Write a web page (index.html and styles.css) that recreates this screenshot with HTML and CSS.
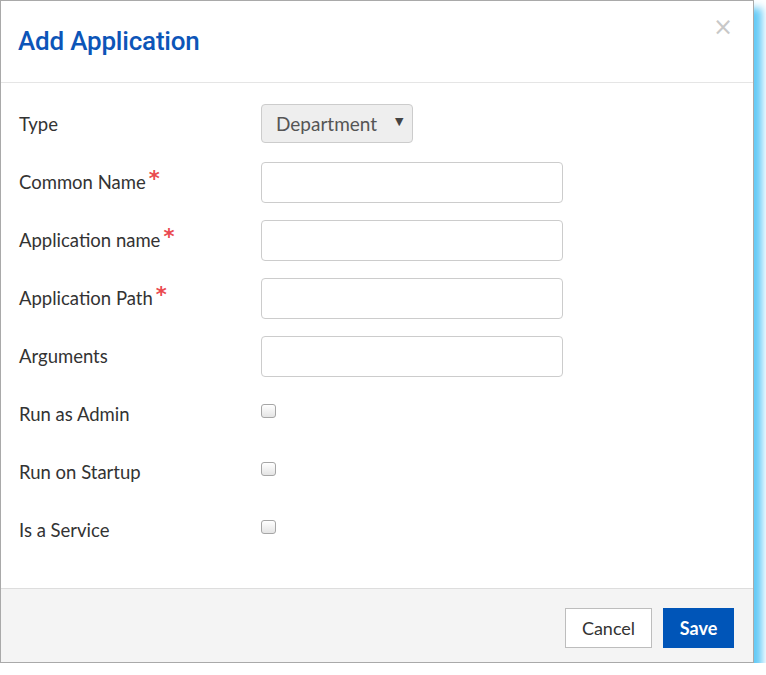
FILE: index.html
```html
<!DOCTYPE html>
<html>
<head>
<meta charset="utf-8">
<link rel="stylesheet" href="styles.css">
</head>
<body>
<div class="modal">
  <div class="modal-header">
    <h1 class="modal-title">Add Application</h1>
    <span class="close">&times;</span>
  </div>
  <div class="modal-body">
    <div class="row">
      <label class="lbl">Type</label>
      <div class="select">Department <span class="caret">&#9660;</span></div>
    </div>
    <div class="row">
      <label class="lbl">Common Name<span class="req">*</span></label>
      <div class="input"></div>
    </div>
    <div class="row">
      <label class="lbl">Application name<span class="req">*</span></label>
      <div class="input"></div>
    </div>
    <div class="row">
      <label class="lbl">Application Path<span class="req">*</span></label>
      <div class="input"></div>
    </div>
    <div class="row">
      <label class="lbl">Arguments</label>
      <div class="input"></div>
    </div>
    <div class="row row-check">
      <label class="lbl">Run as Admin</label>
      <span class="check"></span>
    </div>
    <div class="row row-check">
      <label class="lbl">Run on Startup</label>
      <span class="check"></span>
    </div>
    <div class="row row-check">
      <label class="lbl">Is a Service</label>
      <span class="check"></span>
    </div>
  </div>
  <div class="modal-footer">
    <button class="btn btn-default">Cancel</button>
    <button class="btn btn-primary">Save</button>
  </div>
</div>
</body>
</html>
```
FILE: styles.css
```css
html, body {
  margin: 0;
  padding: 0;
  background: #ffffff;
}
body {
  font-family: Lato, "Open Sans", sans-serif;
  color: #333333;
}
.modal {
  position: relative;
  box-sizing: border-box;
  width: 754px;
  height: 663px;
  border: 1px solid #a9a9a9;
  background: #ffffff;
  box-shadow: 8px 8px 8px rgba(80, 195, 245, 0.9);
  display: flex;
  flex-direction: column;
}
.modal-header {
  position: relative;
  height: 81px;
  border-bottom: 1px solid #e5e5e5;
  padding: 0 17px;
  display: flex;
  align-items: center;
}
.modal-title {
  margin: 0;
  font-family: Roboto, sans-serif;
  font-weight: 500;
  font-size: 26px;
  color: #0c55b8;
  letter-spacing: -0.2px;
  padding-bottom: 1px;
}
.close {
  position: absolute;
  right: 20px;
  top: 12px;
  font-family: "DejaVu Sans", sans-serif;
  font-size: 24px;
  color: #c8c8c8;
}
.modal-body {
  flex: 1;
  padding: 21px 18px 0 17px;
}
.row {
  display: flex;
  align-items: center;
  height: 40px;
  margin-bottom: 18px;
}
.lbl {
  width: 242px;
  font-size: 18.5px;
  color: #333;
  padding-left: 1px;
}
.req {
  color: #ea4a50;
  font-family: "DejaVu Sans", sans-serif;
  font-size: 21px;
  margin-left: 3px;
  position: relative;
  top: -3px;
  font-weight: bold;
}
.select {
  box-sizing: border-box;
  width: 152px;
  height: 39px;
  margin-top: -1px;
  background: #eeeeee;
  border: 1px solid #cccccc;
  border-radius: 4px;
  font-size: 19px;
  color: #555555;
  padding-left: 14px;
  display: flex;
  align-items: center;
}
.caret {
  font-family: "DejaVu Sans", sans-serif;
  font-size: 11px;
  margin-left: 18px;
  color: #444;
  position: relative;
  top: -2px;
}
.input {
  box-sizing: border-box;
  width: 302px;
  height: 41px;
  border: 1px solid #cccccc;
  border-radius: 4px;
  background: #fff;
}
.row-check .check {
  box-sizing: border-box;
  width: 15px;
  height: 14px;
  border: 1px solid #a6a6a6;
  border-radius: 3px;
  background: linear-gradient(#ffffff, #e4e4e4);
  position: relative;
  top: -3px;
}
.modal-footer {
  height: 73px;
  border-top: 1px solid #dddddd;
  background: #f4f4f4;
  display: flex;
  align-items: center;
  justify-content: flex-end;
  padding-right: 19px;
  gap: 11px;
}
.btn {
  height: 40px;
  font-family: Lato, sans-serif;
  font-size: 18px;
  border-radius: 0;
  padding: 0 15px;
  cursor: pointer;
  margin-top: 4px;
}
.btn-default {
  width: 87px;
  background: #ffffff;
  border: 1px solid #bdbdbd;
  color: #333;
}
.btn-primary {
  width: 71px;
  background: #0055b8;
  border: 1px solid #0055b8;
  color: #ffffff;
  font-weight: bold;
}
```
